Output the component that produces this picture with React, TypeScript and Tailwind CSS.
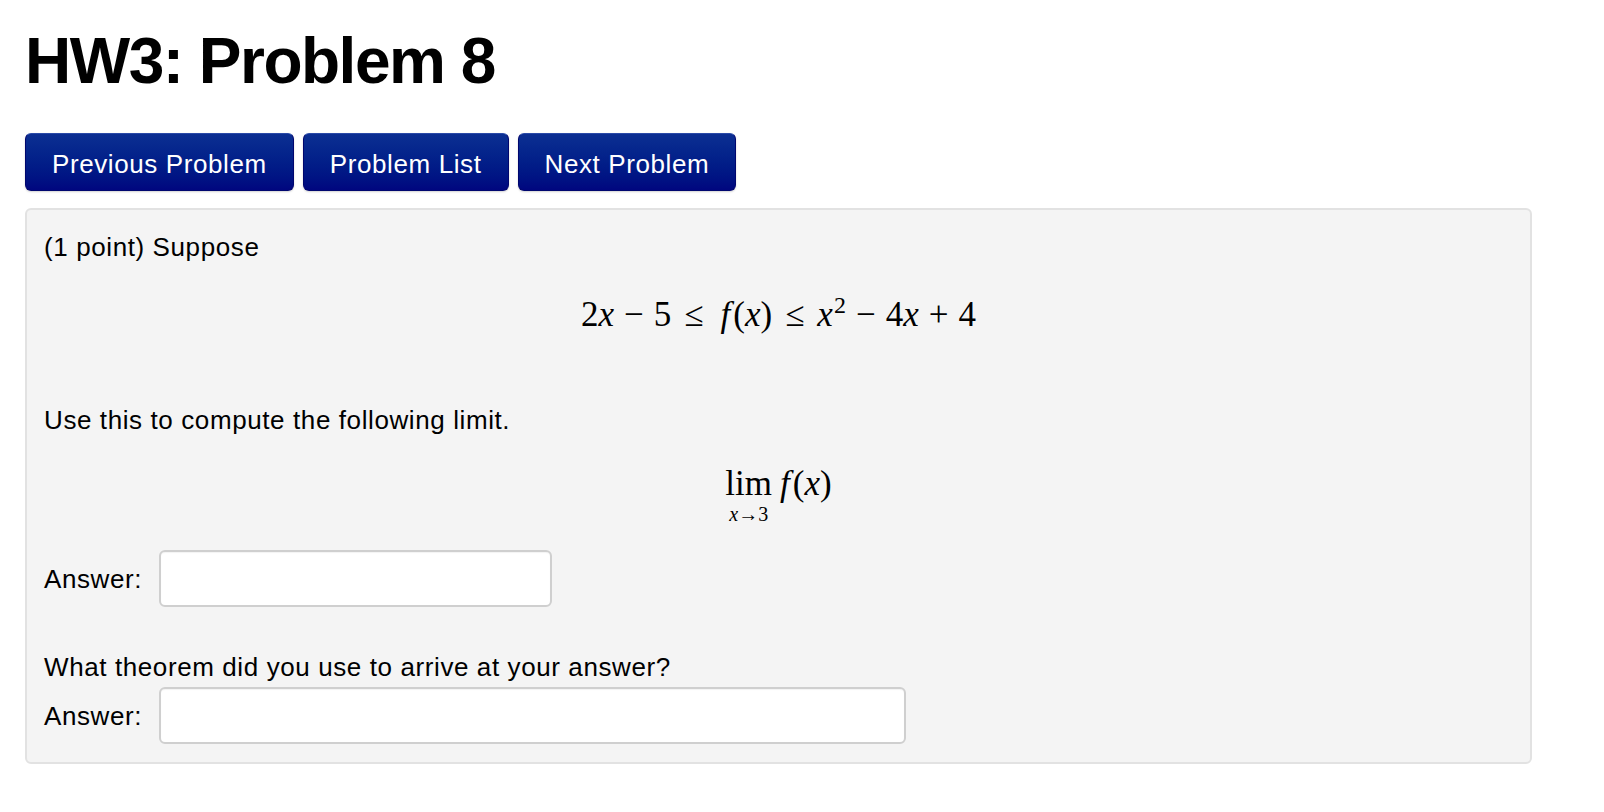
import React from "react";

const sans = "font-['Liberation_Sans',Arial,Helvetica,sans-serif]";
const serif = "font-['Liberation_Serif','Times_New_Roman',serif]";

function NavButton({ label }: { label: string }) {
  return (
    <button
      className={`h-[58px] px-[26px] pt-[4px] rounded-[6px] border border-[#00066e] border-t-[#2a4aa8] bg-linear-to-b from-[#0c2f92] to-[#00067f] text-white text-[26px] tracking-[0.6px] shadow-[0_1px_2px_rgba(0,0,0,0.18)] ${sans}`}
    >
      {label}
    </button>
  );
}

function AnswerRow({ width }: { width: string }) {
  return (
    <div className="flex items-center gap-[17px]">
      <span className="leading-[36px]">Answer:</span>
      <input
        type="text"
        className={`h-[57px] ${width} bg-white border-2 border-[#cfcfcf] rounded-[6px] shadow-[inset_0_1px_1px_rgba(0,0,0,0.05)] outline-none px-3 text-[26px]`}
      />
    </div>
  );
}

export default function App() {
  return (
    <div className={`min-h-screen bg-white text-black px-[25px] ${sans}`}>
      {/* title */}
      <h1 className="pt-[29px] text-[64px] leading-none font-bold tracking-[-1.5px]">HW3: Problem 8</h1>

      {/* nav */}
      <div className="flex gap-[9px] mt-[40px]">
        <NavButton label="Previous Problem" />
        <NavButton label="Problem List" />
        <NavButton label="Next Problem" />
      </div>

      {/* problem body */}
      <div className="mt-[17px] w-[1507px] bg-[#f4f4f4] border-2 border-[#e2e2e2] rounded-[6px] px-[17px] pt-[19px] pb-[18px] text-[26px] tracking-[0.6px]">
        <p className="leading-[36px]">(1 point) Suppose</p>

        <div className={`mt-[30px] h-[40px] leading-[40px] text-[35px] tracking-normal text-center ${serif}`}>
          <span>2</span>
          <i>x</i>
          <span className="mx-[10px]">−</span>
          <span>5</span>
          <span className="mx-[13px]">≤</span>
          <i className="ml-[4px] mr-[3px]">f</i>
          <span>(</span>
          <i>x</i>
          <span>)</span>
          <span className="mx-[13px]">≤</span>
          <i>x</i>
          <span className="text-[24px] relative -top-[13px] ml-[1px]">2</span>
          <span className="mx-[10px]">−</span>
          <span>4</span>
          <i>x</i>
          <span className="mx-[10px]">+</span>
          <span>4</span>
        </div>

        <p className="mt-[67px] leading-[36px]">Use this to compute the following limit.</p>

        <div className={`mt-[26px] flex justify-center tracking-normal ${serif}`}>
          <div className="flex items-start">
            <div className="flex flex-col items-center">
              <span className="text-[35px] leading-[40px]">lim</span>
              <span className="text-[20px] leading-[21px] whitespace-nowrap">
                <i>x</i>→3
              </span>
            </div>
            <span className="ml-[8px] text-[35px] leading-[40px]">
              <i className="mr-[3px]">f</i>(<i>x</i>)
            </span>
          </div>
        </div>

        <div className="mt-[25px]">
          <AnswerRow width="w-[393px]" />
        </div>

        <p className="mt-[42px] leading-[36px]">What theorem did you use to arrive at your answer?</p>
        <div className="mt-[2px]">
          <AnswerRow width="w-[747px]" />
        </div>
      </div>
    </div>
  );
}
